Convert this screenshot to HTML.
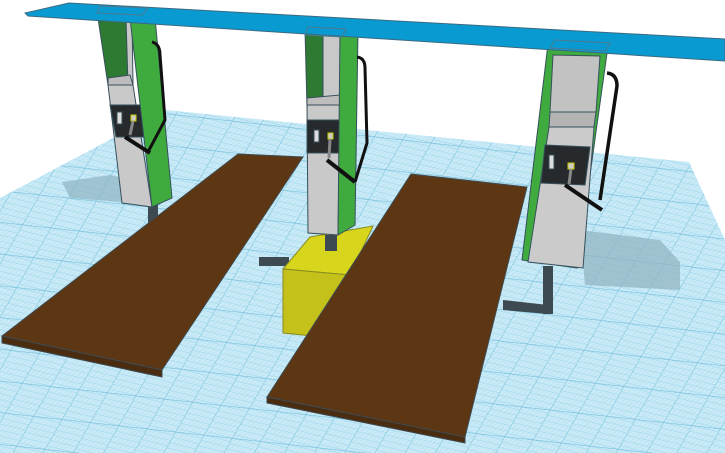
<!DOCTYPE html>
<html><head><meta charset="utf-8"><style>html,body{margin:0;padding:0;background:#fff;overflow:hidden}svg{display:block}</style></head>
<body>
<svg width="725" height="453" viewBox="0 0 725 453" xmlns="http://www.w3.org/2000/svg">
<defs>
<pattern id="g1" width="5" height="5" patternUnits="userSpaceOnUse" patternTransform="skewX(-25) rotate(6)">
<rect width="5" height="5" fill="#c9eaf6"/><path d="M0 0H5M0 0V5" stroke="#97d3ea" stroke-width="0.7"/>
</pattern>
<pattern id="g2" width="30" height="30" patternUnits="userSpaceOnUse" patternTransform="skewX(-25) rotate(6)">
<rect width="30" height="30" fill="url(#g1)"/><path d="M0 0H30M0 0V30" stroke="#6fbcdb" stroke-width="1"/>
</pattern>
</defs>
<polygon points="166,110 689,162 725,240 725,453 0,453 0,198" fill="url(#g2)"/>
<!-- shadows -->
<polygon points="62,182 110,175 160,185 160,205 70,198" fill="#8fb3c2" opacity="0.7"/>
<polygon points="580,230 660,240 680,262 680,290 585,285" fill="#90b2c0" opacity="0.7"/>
<!-- pipes -->
<rect x="259" y="257" width="30" height="9" fill="#3d4a52"/>
<polygon points="503,300 548,305 548,314 503,310" fill="#3d4a52"/>
<rect x="543" y="266" width="10" height="48" fill="#3d4a52"/>
<rect x="148" y="205" width="10" height="18" fill="#3d4a52"/>
<!-- left plank -->
<polygon points="238,154 303,157 162,370 2,336" fill="#5d3714" stroke="#3e4a50" stroke-width="1"/>
<polygon points="2,336 162,370 162,377 2,343" fill="#4a2c10" stroke="#3e4a50" stroke-width="1"/>
<!-- yellow box -->
<polygon points="310,237 373,226 350,275 283,269" fill="#d7d51c" stroke="#8a8a20" stroke-width="1"/>
<polygon points="283,269 350,275 312,336 283,333" fill="#c4c21a" stroke="#8a8a20" stroke-width="1"/>
<!-- right plank -->
<polygon points="411,174 527,187 465,437 267,397" fill="#5d3714" stroke="#3e4a50" stroke-width="1"/>
<polygon points="267,397 465,437 465,443 267,403" fill="#4a2c10" stroke="#3e4a50" stroke-width="1"/>

<!-- left pump -->
<g stroke="#36505c" stroke-width="1">
<polygon points="98,18 130,18 133,85 108,85" fill="#2f7a32"/>
<polygon points="126,18 132,18 133,85 128,85" fill="#c8c8c8"/>
<polygon points="108,78 130,75 133,85 108,85" fill="#bdbdbd"/>
<polygon points="108,85 133,85 152,207 122,203" fill="#c9c9c9"/>
<polygon points="110,105 143,105 147,137 116,137" fill="#262a2c"/>
<polygon points="130,18 155,18 172,198 152,207" fill="#3fab3f"/>
<rect x="117" y="112" width="5" height="12" fill="#ddd"/>
</g>
<path d="M152,42 Q160,44 160,55 L165,120 L148,152" fill="none" stroke="#111" stroke-width="3"/>
<path d="M125,137 L150,153" stroke="#111" stroke-width="4"/>
<rect x="131" y="115" width="5" height="6" fill="#ccc" stroke="#cc0" stroke-width="1"/>
<path d="M133,121 L130,135" stroke="#888" stroke-width="3"/>

<!-- center pump -->
<g stroke="#36505c" stroke-width="1">
<polygon points="305,30 323,30 323,107 307,107" fill="#2f7a32"/>
<polygon points="323,30 341,30 340,107 323,107" fill="#c8c8c8"/>
<polygon points="307,98 340,95 340,107 307,107" fill="#bdbdbd"/>
<polygon points="307,105 340,105 338,235 308,233" fill="#c9c9c9"/>
<polygon points="307,120 340,120 339,153 307,153" fill="#262a2c"/>
<polygon points="340,30 358,30 355,225 338,235" fill="#3fab3f"/>
<rect x="314" y="130" width="5" height="12" fill="#ddd"/>
</g>
<rect x="325" y="235" width="12" height="16" fill="#3d4a52"/>
<path d="M357,57 Q365,58 365,68 L367,143 L355,182" fill="none" stroke="#111" stroke-width="3"/>
<path d="M327,160 L355,182" stroke="#111" stroke-width="4"/>
<rect x="328" y="133" width="5" height="6" fill="#ccc" stroke="#cc0" stroke-width="1"/>
<path d="M330,139 L329,158" stroke="#888" stroke-width="3"/>

<!-- right pump -->
<g stroke="#36505c" stroke-width="1">
<polygon points="548,44 608,46 577,268 522,260" fill="#3fab3f"/>
<polygon points="553,55 600,56 596,112 550,112" fill="#c2c2c2"/>
<polygon points="550,112 596,112 594,127 549,127" fill="#b4b4b4"/>
<polygon points="549,127 594,127 583,268 528,262" fill="#cbcbcb"/>
<polygon points="545,145 590,147 585,185 541,183" fill="#262a2c"/>
<rect x="549" y="155" width="5" height="14" fill="#ddd"/>
</g>
<path d="M607,73 Q617,74 617,86 L600,200" fill="none" stroke="#111" stroke-width="3.5"/>
<path d="M565,185 L602,210" stroke="#111" stroke-width="4"/>
<rect x="568" y="163" width="6" height="6" fill="#ccc" stroke="#cc0" stroke-width="1"/>
<path d="M571,169 L569,184" stroke="#888" stroke-width="3"/>

<!-- bar -->
<polygon points="69,3 725,39 725,61 28,16 25,13" fill="#0a9ad2" stroke="#3a6a80" stroke-width="1"/>
<polygon points="100,6 148,8 142,15 97,13" fill="none" stroke="#4a7a90" stroke-width="1"/>
<polygon points="308,27 346,29 342,37 305,35" fill="none" stroke="#4a7a90" stroke-width="1"/>
<polygon points="555,40 610,43 606,51 550,48" fill="none" stroke="#4a7a90" stroke-width="1"/>
</svg>
</body></html>
